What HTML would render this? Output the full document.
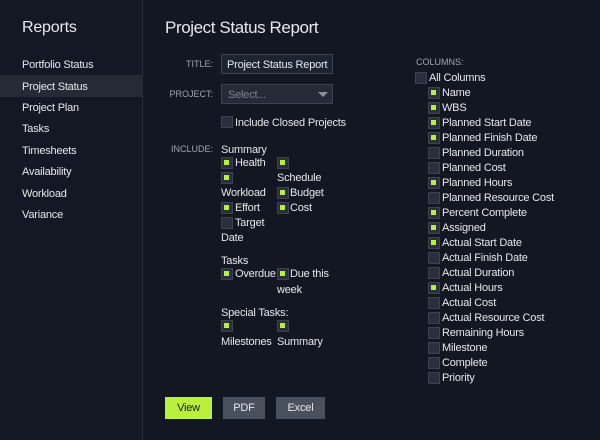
<!DOCTYPE html>
<html><head><style>
*{margin:0;padding:0;box-sizing:border-box}
body{width:600px;height:440px;background:#131722;font-family:"Liberation Sans",sans-serif;color:#e6e8ec;font-size:11px;position:relative;overflow:hidden;letter-spacing:-0.2px}
.sb{position:absolute;left:0;top:0;width:143px;height:440px;background:#141824;border-right:1px solid #2a2e3a}
.a{position:absolute;white-space:nowrap;line-height:14px;margin-top:1px}
.cb{position:absolute;width:12px;height:12px;background:#2a2f3b;border:1px solid #3c4250;margin-left:-0.5px;margin-top:-0.5px}
.cb.on::after{content:"";position:absolute;left:2.5px;top:2.5px;width:5px;height:5px;background:#b8f03c}
.lbl{position:absolute;color:#a0a5b0;font-size:9px;text-align:right;width:80px;line-height:12px;letter-spacing:0}
.btn{position:absolute;top:397px;height:22px;line-height:22px;text-align:center;font-size:11px;background:#4a515e;color:#e6e8ec}
</style></head><body>
<div class="sb"></div>
<div class="a" style="left:22px;top:17px;font-size:16px;line-height:20px">Reports</div>
<div style="position:absolute;left:0;top:75px;width:143px;height:22px;background:#252a35"></div>
<div class="a" style="left:22px;top:57px">Portfolio Status</div>
<div class="a" style="left:22px;top:79px">Project Status</div>
<div class="a" style="left:22px;top:100px">Project Plan</div>
<div class="a" style="left:22px;top:121px">Tasks</div>
<div class="a" style="left:22px;top:143px">Timesheets</div>
<div class="a" style="left:22px;top:164px">Availability</div>
<div class="a" style="left:22px;top:186px">Workload</div>
<div class="a" style="left:22px;top:207px">Variance</div>

<div class="a" style="left:165px;top:16px;font-size:17px;line-height:22px;letter-spacing:-0.4px">Project Status Report</div>

<div class="lbl" style="left:133px;top:58px">TITLE:</div>
<div style="position:absolute;left:221px;top:54px;width:112px;height:20px;background:#1e2330;border:1px solid #3c4250"></div>
<div class="a" style="left:227px;top:57px">Project Status Report</div>
<div class="lbl" style="left:133px;top:88px">PROJECT:</div>
<div style="position:absolute;left:221px;top:84px;width:112px;height:20px;background:#252a36;border:1px solid #3c4250"></div>
<div class="a" style="left:228px;top:87px;color:#7d8390">Select...</div>
<div style="position:absolute;left:318px;top:92px;border-left:5px solid transparent;border-right:5px solid transparent;border-top:5px solid #8a909c"></div>
<div class="cb" style="left:221px;top:116px"></div>
<div class="a" style="left:235px;top:115px">Include Closed Projects</div>

<div class="lbl" style="left:133px;top:143px">INCLUDE:</div>
<div class="a" style="left:221px;top:142px">Summary</div>
<div class="cb on" style="left:221px;top:157px"></div><div class="a" style="left:235px;top:155px">Health</div>
<div class="cb on" style="left:277px;top:157px"></div>
<div class="cb on" style="left:221px;top:172px"></div>
<div class="a" style="left:277px;top:170px">Schedule</div>
<div class="a" style="left:221px;top:185px">Workload</div>
<div class="cb on" style="left:277px;top:187px"></div><div class="a" style="left:290px;top:185px">Budget</div>
<div class="cb on" style="left:221px;top:202px"></div><div class="a" style="left:235px;top:200px">Effort</div>
<div class="cb on" style="left:277px;top:202px"></div><div class="a" style="left:290px;top:200px">Cost</div>
<div class="cb" style="left:221px;top:217px"></div><div class="a" style="left:235px;top:215px">Target</div>
<div class="a" style="left:221px;top:230px">Date</div>
<div class="a" style="left:221px;top:253px">Tasks</div>
<div class="cb on" style="left:221px;top:268px"></div><div class="a" style="left:235px;top:266px">Overdue</div>
<div class="cb on" style="left:277px;top:268px"></div><div class="a" style="left:290px;top:266px">Due this</div>
<div class="a" style="left:277px;top:282px">week</div>
<div class="a" style="left:221px;top:305px">Special Tasks:</div>
<div class="cb on" style="left:221px;top:320px"></div>
<div class="cb on" style="left:277px;top:320px"></div>
<div class="a" style="left:221px;top:334px">Milestones</div>
<div class="a" style="left:277px;top:334px">Summary</div>

<div class="btn" style="left:165px;width:47px;background:#b8f03c;color:#1a1f10">View</div>
<div class="btn" style="left:223px;width:42px">PDF</div>
<div class="btn" style="left:276px;width:49px">Excel</div>

<div class="a" style="left:416px;top:54px;font-size:9px;color:#a0a5b0;letter-spacing:0">COLUMNS:</div>
<div class="cb" style="left:415px;top:72px"></div><div class="a" style="left:429px;top:70px">All Columns</div>
<div id="cols"></div>
<script>
var c=[["Name",1],["WBS",1],["Planned Start Date",1],["Planned Finish Date",1],["Planned Duration",0],["Planned Cost",0],["Planned Hours",1],["Planned Resource Cost",0],["Percent Complete",1],["Assigned",1],["Actual Start Date",1],["Actual Finish Date",0],["Actual Duration",0],["Actual Hours",1],["Actual Cost",0],["Actual Resource Cost",0],["Remaining Hours",0],["Milestone",0],["Complete",0],["Priority",0]];
var h="";c.forEach(function(x,i){var y=92+i*15;h+='<div class="cb'+(x[1]?' on':'')+'" style="left:428px;top:'+(y-5)+'px"></div><div class="a" style="left:442px;top:'+(y-7)+'px">'+x[0]+'</div>';});
document.getElementById("cols").innerHTML=h;
</script>
</body></html>
